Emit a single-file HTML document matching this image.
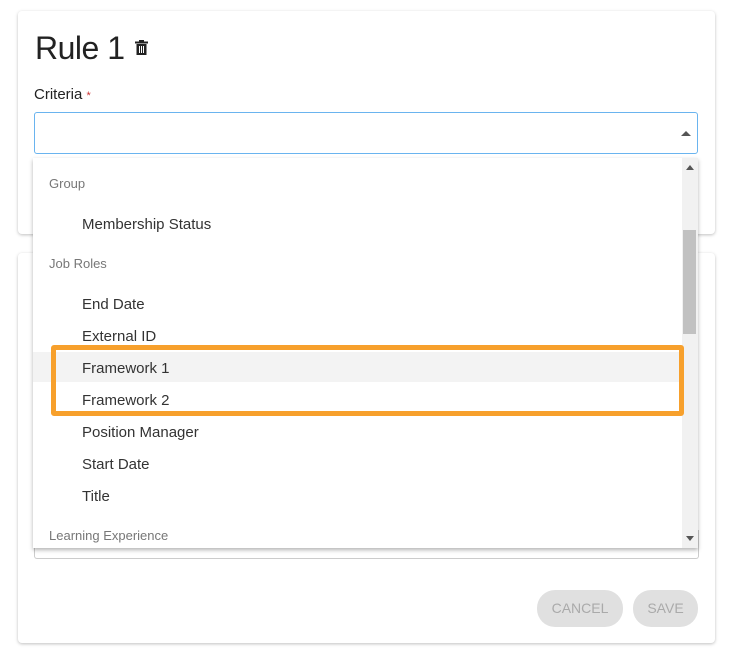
<!DOCTYPE html>
<html><head><style>
body{margin:0;width:733px;height:657px;background:#fff;font-family:"Liberation Sans",sans-serif;position:relative;overflow:hidden}
.card{position:absolute;left:18px;width:697px;background:#fff;border-radius:4px;box-shadow:0 1px 3px rgba(0,0,0,.25)}
.abs{position:absolute}
.it{position:absolute;left:49px;font-size:15px;color:#333}
.gh{position:absolute;left:16px;font-size:13px;color:#777}
</style></head><body>
<div class="card" style="top:11px;height:223px"></div>
<div class="card" style="top:253px;height:390px"></div>
<div class="abs" style="left:35px;top:30px;font-size:32px;color:#222;font-weight:300;letter-spacing:-0.5px">Rule 1</div>
<svg class="abs" style="left:135px;top:40px" width="13" height="15" viewBox="0 0 13 15"><rect x="0" y="1.5" width="13" height="2" fill="#222"/><rect x="4" y="0" width="5" height="2" fill="#222"/><path d="M1.5 4h10v11h-10z" fill="#222"/><rect x="4" y="6" width="1" height="7" fill="#fff"/><rect x="6" y="6" width="1" height="7" fill="#fff"/><rect x="8" y="6" width="1" height="7" fill="#fff"/></svg>
<div class="abs" style="left:34px;top:86px;font-size:15px;color:#222">Criteria <span style="color:#c33;font-size:11px">*</span></div>
<div class="abs" style="left:34px;top:112px;width:662px;height:40px;border:1px solid #6ab4ef;border-radius:3px"></div>
<div class="abs" style="left:681px;top:131px;width:0;height:0;border-left:5px solid transparent;border-right:5px solid transparent;border-bottom:5px solid #555"></div>
<div class="abs" style="left:34px;top:530px;width:663px;height:28px;border:1px solid #ccc;border-top:none;border-radius:0 0 3px 3px"></div>
<div class="abs" style="left:537px;top:590px;width:86px;height:37px;border-radius:18px;background:#e0e0e0;color:#aaa;font-size:14px;text-align:center;line-height:37px">CANCEL</div>
<div class="abs" style="left:633px;top:590px;width:65px;height:37px;border-radius:18px;background:#e0e0e0;color:#aaa;font-size:14px;text-align:center;line-height:37px">SAVE</div>
<div class="abs" style="left:33px;top:158px;width:665px;height:390px;background:#fff;box-shadow:0 2px 4px rgba(0,0,0,.3);overflow:hidden">
 <div class="abs" style="left:649px;top:0;width:16px;height:390px;background:#f1f1f1"></div>
 <div class="abs" style="left:650px;top:72px;width:13px;height:104px;background:#c1c1c1"></div>
 <div class="abs" style="left:653px;top:7px;border-left:4px solid transparent;border-right:4px solid transparent;border-bottom:5px solid #555"></div>
 <div class="abs" style="left:653px;top:378px;border-left:4px solid transparent;border-right:4px solid transparent;border-top:5px solid #555"></div>
 <div class="abs" style="left:0;top:194px;width:649px;height:30px;background:#f3f3f3"></div>
 <div class="gh" style="top:18px">Group</div>
 <div class="it" style="top:58px">Membership Status</div>
 <div class="gh" style="top:98px">Job Roles</div>
 <div class="it" style="top:138px">End Date</div>
 <div class="it" style="top:170px">External ID</div>
 <div class="it" style="top:202px">Framework 1</div>
 <div class="it" style="top:234px">Framework 2</div>
 <div class="it" style="top:266px">Position Manager</div>
 <div class="it" style="top:298px">Start Date</div>
 <div class="it" style="top:330px">Title</div>
 <div class="gh" style="top:370px">Learning Experience</div>
</div>
<div class="abs" style="left:51px;top:345px;width:623px;height:61px;border:5px solid #f7a02c;border-radius:3px"></div>
</body></html>
